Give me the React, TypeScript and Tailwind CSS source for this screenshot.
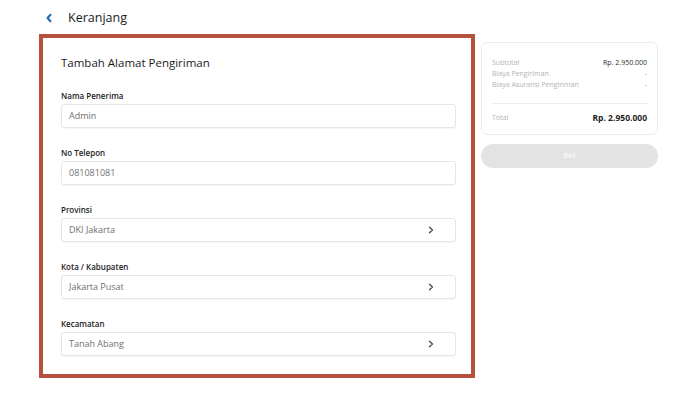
import React from 'react';

interface Field {
  label: string;
  value: string;
  select?: boolean;
}

const fields: Field[] = [
  { label: 'Nama Penerima', value: 'Admin' },
  { label: 'No Telepon', value: '081081081' },
  { label: 'Provinsi', value: 'DKI Jakarta', select: true },
  { label: 'Kota / Kabupaten', value: 'Jakarta Pusat', select: true },
  { label: 'Kecamatan', value: 'Tanah Abang', select: true },
];

function ChevronRight() {
  return (
    <svg width="6" height="8" viewBox="0 0 6 8" fill="none">
      <path d="M1.5 1.2L4.5 4L1.5 6.8" stroke="#444" strokeWidth="1.2" strokeLinecap="round" strokeLinejoin="round" />
    </svg>
  );
}

function FormField({ field }: { field: Field }) {
  return (
    <div className="flex flex-col">
      <label className="text-[8px] leading-[11px] font-semibold text-[#222]">{field.label}</label>
      <div className="mt-[3px] h-[24px] flex items-center justify-between rounded-[3px] border border-[#e6e6e6] bg-white pl-[7px] pr-[21px] shadow-[0_1px_1px_rgba(0,0,0,0.04)]">
        <span className="text-[9px] text-[#707070]">{field.value}</span>
        {field.select && <ChevronRight />}
      </div>
    </div>
  );
}

export default function App() {
  return (
    <div className="w-[700px] h-[393px] bg-white font-['Open_Sans',sans-serif] overflow-hidden">
      <div className="flex items-center h-[34px] pt-[2px] pl-[45px]">
        <svg width="8" height="10" viewBox="0 0 8 10" fill="none">
          <path d="M5.5 1.8L2.5 5L5.5 8.2" stroke="#2563b0" strokeWidth="2" strokeLinecap="round" strokeLinejoin="round" />
        </svg>
        <h1 className="ml-[15px] text-[12.5px] font-medium text-[#1a1a1a]">Keranjang</h1>
      </div>

      <div className="flex items-start pl-[39px] gap-[6px]">
        <div className="w-[436px] h-[344px] border-[4px] border-[#b4503c] bg-white pl-[18px] pr-[15px] pt-[15px]">
          <h2 className="text-[11.5px] leading-[20px] font-medium text-[#1a1a1a]">Tambah Alamat Pengiriman</h2>
          <div className="mt-[17px] flex flex-col gap-[19px]">
            {fields.map((f) => (
              <FormField key={f.label} field={f} />
            ))}
          </div>
        </div>

        <div className="w-[177px] flex flex-col mt-[8px]">
          <div className="rounded-[6px] border border-[#ececec] bg-white px-[10px] pt-[14px] pb-[9px]">
            <div className="flex flex-col text-[7px] leading-[11px]">
              <div className="flex justify-between">
                <span className="text-[#b3b3b3]">Subtotal</span>
                <span className="text-[#2d2d2d]">Rp. 2.950.000</span>
              </div>
              <div className="flex justify-between">
                <span className="text-[#b3b3b3]">Biaya Pengiriman</span>
                <span className="text-[#999]">-</span>
              </div>
              <div className="flex justify-between">
                <span className="text-[#b3b3b3]">Biaya Asuransi Pengiriman</span>
                <span className="text-[#999]">-</span>
              </div>
            </div>
            <div className="mt-[13px] border-t border-[#ececec]" />
            <div className="mt-[8px] flex items-center justify-between">
              <span className="text-[7px] text-[#b3b3b3]">Total</span>
              <span className="text-[8.5px] font-bold text-[#1f1f1f]">Rp. 2.950.000</span>
            </div>
          </div>
          <button className="mt-[9px] h-[24px] rounded-full bg-[#e3e3e3] text-[7px] text-white">Beli</button>
        </div>
      </div>
    </div>
  );
}
